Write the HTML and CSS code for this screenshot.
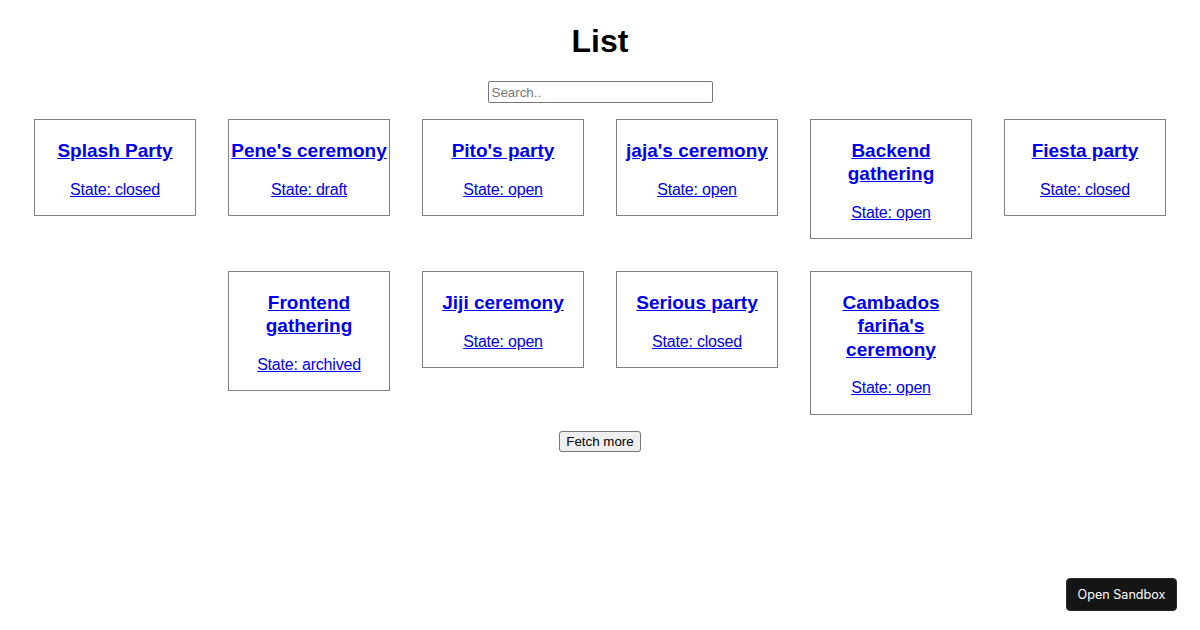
FILE: index.html
```html
<!DOCTYPE html>
<html lang="en">
<head>
<meta charset="utf-8">
<title>List</title>
<link rel="stylesheet" href="styles.css">
</head>
<body>
<h1 class="title">List</h1>
<div class="search-row"><input class="search" type="text" placeholder="Search.."></div>
<div class="cards">
  <a class="card" href="#"><h3 class="card-title">Splash Party</h3><p class="card-state">State: closed</p></a>
  <a class="card" href="#"><h3 class="card-title">Pene's ceremony</h3><p class="card-state">State: draft</p></a>
  <a class="card" href="#"><h3 class="card-title">Pito's party</h3><p class="card-state">State: open</p></a>
  <a class="card" href="#"><h3 class="card-title">jaja's ceremony</h3><p class="card-state">State: open</p></a>
  <a class="card" href="#"><h3 class="card-title">Backend gathering</h3><p class="card-state">State: open</p></a>
  <a class="card" href="#"><h3 class="card-title">Fiesta party</h3><p class="card-state">State: closed</p></a>
  <a class="card" href="#"><h3 class="card-title">Frontend gathering</h3><p class="card-state">State: archived</p></a>
  <a class="card" href="#"><h3 class="card-title">Jiji ceremony</h3><p class="card-state">State: open</p></a>
  <a class="card" href="#"><h3 class="card-title">Serious party</h3><p class="card-state">State: closed</p></a>
  <a class="card" href="#"><h3 class="card-title">Cambados fariña's ceremony</h3><p class="card-state">State: open</p></a>
</div>
<div class="fetch-row"><button class="fetch" type="button">Fetch more</button></div>
<button class="sandbox" type="button">Open Sandbox</button>
</body>
</html>
```

FILE: styles.css
```css
body {
  margin: 0 8px 8px;
  padding: 0;
  font-family: "Liberation Sans", Arial, sans-serif;
  background: #fff;
  color: #000;
}
.title {
  font-size: 32px;
  font-weight: bold;
  text-align: center;
  margin: 23px 0 21.44px;
}
.search-row {
  text-align: center;
  line-height: 0;
}
.search {
  box-sizing: border-box;
  width: 225px;
  height: 22px;
  padding: 1px 3px;
  border: 1px solid #767676;
  border-radius: 2px;
  font-family: "Liberation Sans", Arial, sans-serif;
  font-size: 13.33px;
  color: #000;
}
.search::placeholder {
  color: #757575;
}
.cards {
  display: flex;
  flex-wrap: wrap;
  justify-content: center;
  align-items: flex-start;
}
.card {
  display: block;
  width: 160px;
  margin: 16px;
  border: 1px solid #808080;
  text-align: center;
  color: #0000ee;
  text-decoration: underline;
}
.card-title {
  font-size: 19px;
  line-height: 23.3px;
  font-weight: bold;
  margin: 18.5px 0;
}
.card-state {
  font-size: 16px;
  line-height: 18.4px;
  letter-spacing: -0.2px;
  margin: 16px 0;
}
.fetch-row {
  text-align: center;
}
.fetch {
  font-family: "Liberation Sans", Arial, sans-serif;
  font-size: 13.33px;
  padding: 1px 6px;
  border: 1px solid #767676;
  border-radius: 3px;
  background: #efefef;
  color: #000;
  height: 21px;
}
.sandbox {
  position: fixed;
  right: 23px;
  bottom: 19px;
  width: 111px;
  height: 33px;
  border: 1px solid #2a2a2a;
  border-radius: 4px;
  background: #151515;
  color: #fff;
  font-family: Inter, "Liberation Sans", sans-serif;
  font-size: 12.6px;
  padding: 0;
}
```
